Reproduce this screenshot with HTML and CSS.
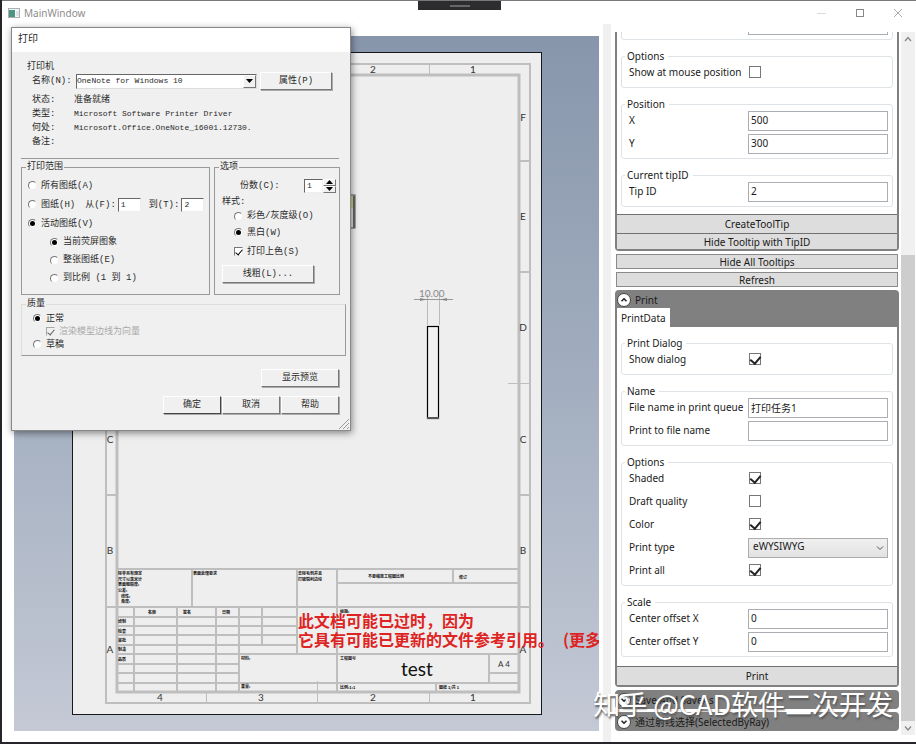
FILE: index.html
```html
<!DOCTYPE html>
<html lang="en">
<head>
<meta charset="utf-8">
<title>MainWindow</title>
<link rel="stylesheet" href="styles.css">
</head>
<body>
<div class="notch"></div>
<div class="window">
  <header class="titlebar">
    <svg class="app-icon" width="12" height="10" viewBox="0 0 12 10"><rect x=".5" y=".5" width="11" height="9" fill="#f4f6f6" stroke="#a9b0b0"/><rect x="1" y="2" width="6" height="7" fill="#4d9484"/><rect x="8" y="3" width="3" height="5" fill="#dfe3e6"/></svg>
    <h1>MainWindow</h1>
    <div class="caption">
      <button aria-label="Minimize"><svg width="10" height="10"><path d="M0 5.5H9" stroke="#dadada" fill="none"/></svg></button>
      <button aria-label="Maximize"><svg width="10" height="10"><rect x="1.500" y="1.500" width="7" height="7" stroke="#888" fill="none"/></svg></button>
      <button aria-label="Close"><svg width="10" height="10"><path d="M1 1L9 9M9 1L1 9" stroke="#aaa" fill="none"/></svg></button>
    </div>
  </header>

  <main class="workspace">
    <div class="viewport">
      <svg class="sheet" viewBox="14 36 585 695">
        <defs><linearGradient id="sky" x1="0" y1="0" x2="0" y2="1"><stop offset="0" stop-color="#8896ac"/><stop offset=".5" stop-color="#a2aebf"/><stop offset="1" stop-color="#c4c9d5"/></linearGradient></defs>
        <rect x="14" y="36" width="585" height="695" fill="url(#sky)"/>
        <rect x="72.500" y="52.500" width="469" height="662" fill="#eee" stroke="#16181c"/>
        <g fill="none" stroke="#bdbebd" stroke-width="2">
          <rect x="106" y="64" width="424" height="639"/>
          <rect x="117" y="75" width="402" height="617" stroke-width="3"/>
          <path d="M117 569H519M117 607H519M192 569V607M297 569V654M337 569V692M337 583H519M453 569V583"/>
          <path d="M134 607V692M177 607V692M216 607V692M239 607V692M262 607V645"/>
          <path d="M117 617H297M117 626H297M117 635H297M117 645H297M117 654H519M117 664H239M117 673H239M117 683H519M436 683V692M489 654V683M489 673H519"/>
        </g>
        <g fill="none" stroke="#bdbebd" stroke-width="1">
          <path d="M429.500 64V75M317.500 64V75M206.500 692V703M317.500 681V703M429.500 692V703M508 383.500H530"/>
          <path stroke-width="2" d="M519 161H530M519 272H530M519 495H530M519 607H530M106 495H117M106 607H117"/>
        </g>
        <g class="zone">
          <text x="373" y="73">2</text><text x="473" y="73">1</text>
          <text x="523" y="121">F</text><text x="523" y="220">E</text><text x="523" y="331">D</text><text x="523" y="443">C</text><text x="523" y="554">B</text><text x="523" y="653">A</text>
          <text x="110" y="443">C</text><text x="110" y="554">B</text><text x="110" y="653">A</text>
          <text x="160" y="701">4</text><text x="261" y="701">3</text><text x="373" y="701">2</text><text x="473" y="701">1</text>
        </g>
        <g class="note">
          <text x="118" y="575">除非另有规定</text><text x="118" y="581">尺寸以毫米计</text><text x="118" y="586">表面粗糙度:</text><text x="118" y="592">公差:</text><text x="121" y="598">线性:</text><text x="121" y="603">角度:</text>
          <text x="193" y="575">表面处理要求</text>
          <text x="298" y="575">去除毛刺并且</text><text x="298" y="581">打破锐利边缘</text>
          <text x="368" y="578">不要缩放工程图比例</text><text x="459" y="579">修订</text>
          <text x="148" y="614">名称</text><text x="183" y="614">签名</text><text x="222" y="614">日期</text>
          <text x="118" y="623">绘制</text><text x="118" y="633">检查</text><text x="118" y="642">审批</text><text x="118" y="651">制造</text><text x="118" y="661">品质</text>
          <text x="241" y="660">材料:</text><text x="241" y="688">重量:</text><text x="340" y="613">标题:</text><text x="340" y="660">工程图号</text><text x="340" y="689">比例:1:1</text><text x="439" y="689">图纸 1/共 1</text>
        </g>
        <text class="part" x="401" y="676">test</text>
        <text class="paper" x="498" y="667">A 4</text>
        <g fill="none" stroke="#999">
          <path stroke="#bbb" d="M427.500 294V325M439.500 294V325"/><path d="M414 299.500H453"/>
        </g>
        <path fill="#888" d="M427 299.500L420 298V301ZM440 299.500L447 298V301Z"/>
        <text class="dim" x="419" y="297">10.00</text>
        <rect x="427.500" y="326.500" width="11" height="92" fill="#f2f2f2" stroke="#000" stroke-width="1.200"/>
        <path d="M427 418H439" stroke="#555" stroke-width="2"/>
        <rect x="340" y="195" width="15" height="33" fill="#ddd" stroke="#555"/>
        <rect x="340" y="196" width="13" height="12" fill="#cbd088"/>
        <path d="M354 196V228" stroke="#666" stroke-width="2"/>
        <g class="warning">
          <text x="298" y="627">此文档可能已过时，因为</text>
          <text x="298" y="646">它具有可能已更新的文件参考引用。</text>
          <text x="563" y="646">(更多</text>
        </g>
      </svg>
    </div>

    <div class="splitter"></div>

    <div class="panel">
      <section class="card first">
        <div class="fields">
          <fieldset><div class="row"><span></span><input type="text" aria-label="Text"></div></fieldset>
          <fieldset><legend>Options</legend>
            <div class="row"><label for="mouse">Show at mouse position</label><input id="mouse" type="checkbox"></div></fieldset>
          <fieldset><legend>Position</legend>
            <div class="row"><label for="px">X</label><input id="px" type="text" value="500"></div>
            <div class="row"><label for="py">Y</label><input id="py" type="text" value="300"></div></fieldset>
          <fieldset><legend>Current tipID</legend>
            <div class="row"><label for="tip">Tip ID</label><input id="tip" type="text" value="2"></div></fieldset>
        </div>
        <button class="wide tall">CreateToolTip</button>
        <button class="wide">Hide Tooltip with TipID</button>
      </section>
      <button class="wide loose">Hide All Tooltips</button>
      <button class="wide loose">Refresh</button>

      <section class="card">
        <h2><button class="knob" aria-label="Collapse"><svg width="14" height="14" viewBox="0 0 14 14"><circle cx="7" cy="7" r="6.500" fill="#fff" stroke="#444"/><path d="M4.500 8.300L7 5.800L9.500 8.300" fill="none" stroke="#222" stroke-width="1.500"/></svg></button>Print</h2>
        <div class="tabs"><button class="tab">PrintData</button></div>
        <div class="fields body">
          <fieldset><legend>Print Dialog</legend>
            <div class="row"><label for="show">Show dialog</label><input id="show" type="checkbox" checked></div></fieldset>
          <fieldset><legend>Name</legend>
            <div class="row"><label for="queue">File name in print queue</label><input id="queue" type="text" value="打印任务1"></div>
            <div class="row"><label for="file">Print to file name</label><input id="file" type="text"></div></fieldset>
          <fieldset><legend>Options</legend>
            <div class="row"><label for="shaded">Shaded</label><input id="shaded" type="checkbox" checked></div>
            <div class="row"><label for="draft">Draft quality</label><input id="draft" type="checkbox"></div>
            <div class="row"><label for="color">Color</label><input id="color" type="checkbox" checked></div>
            <div class="row"><label for="type">Print type</label><div class="combo"><select id="type"><option>eWYSIWYG</option></select><svg width="8" height="6" viewBox="0 0 8 6"><path d="M1 1.500L4 4.500L7 1.500" fill="none" stroke="#555"/></svg></div></div>
            <div class="row"><label for="all">Print all</label><input id="all" type="checkbox" checked></div></fieldset>
          <fieldset><legend>Scale</legend>
            <div class="row"><label for="ox">Center offset X</label><input id="ox" type="text" value="0"></div>
            <div class="row"><label for="oy">Center offset Y</label><input id="oy" type="text" value="0"></div></fieldset>
        </div>
        <button class="wide tall">Print</button>
      </section>
      <section class="card folded"><h2><button class="knob" aria-label="Expand"><svg width="14" height="14" viewBox="0 0 14 14"><circle cx="7" cy="7" r="6.500" fill="#fff" stroke="#444"/><path d="M4.500 5.800L7 8.300L9.500 5.800" fill="none" stroke="#222" stroke-width="1.500"/></svg></button>Save And SaveAs</h2></section>
      <section class="card folded"><h2><button class="knob" aria-label="Expand"><svg width="14" height="14" viewBox="0 0 14 14"><circle cx="7" cy="7" r="6.500" fill="#fff" stroke="#444"/><path d="M4.500 5.800L7 8.300L9.500 5.800" fill="none" stroke="#222" stroke-width="1.500"/></svg></button>通过射线选择(SelectedByRay)</h2></section>
    </div>

    <div class="scrollbar">
      <svg width="8" height="14" viewBox="0 0 8 14"><path d="M1 9L4 5.500L7 9" fill="none" stroke="#888" stroke-width="1.300"/></svg>
      <div class="track"><div class="thumb"></div></div>
      <svg width="8" height="14" viewBox="0 0 8 14"><path d="M1 5.500L4 9L7 5.500" fill="none" stroke="#888" stroke-width="1.300"/></svg>
    </div>
  </main>
  <div class="watermark">知乎 @CAD软件二次开发</div>
</div>

<form class="dialog">
  <h2>打印</h2>
  <div class="dialog-body">
    <div class="printer">
      <h3>打印机</h3>
      <div class="name-row"><label for="printer">名称(N):</label>
        <div class="classic-combo"><select id="printer"><option>OneNote for Windows 10</option></select><span class="drop"><svg width="7" height="4"><path d="M0 0H7L3.500 4Z"/></svg></span></div>
        <button type="button">属性(P)</button></div>
      <dl>
        <dt>状态:</dt><dd class="cjk">准备就绪</dd>
        <dt>类型:</dt><dd>Microsoft Software Printer Driver</dd>
        <dt>何处:</dt><dd>Microsoft.Office.OneNote_16001.12730.</dd>
        <dt>备注:</dt><dd></dd>
      </dl>
    </div>
    <div class="groups">
      <fieldset><legend>打印范围</legend>
        <div class="line"><label><input type="radio" name="range">所有图纸(A)</label></div>
        <div class="line"><label><input type="radio" name="range">图纸(H)</label><label class="from">从(F): <input type="text" value="1"></label><label class="to">到(T): <input type="text" value="2"></label></div>
        <div class="line"><label><input type="radio" name="range" checked>活动图纸(V)</label></div>
        <div class="nested">
          <div class="line"><label><input type="radio" name="area" checked>当前荧屏图象</label></div>
          <div class="line"><label><input type="radio" name="area">整张图纸(E)</label></div>
          <div class="line"><label><input type="radio" name="area">到比例 (1 到 1)</label></div>
        </div>
      </fieldset>
      <fieldset class="choices"><legend>选项</legend>
        <div class="copies"><label for="copies">份数(C):</label><input id="copies" type="text" value="1"><span class="spin"><button type="button" aria-label="Up"><svg width="7" height="4"><path d="M0 4H7L3.500 0Z"/></svg></button><button type="button" aria-label="Down"><svg width="7" height="4"><path d="M0 0H7L3.500 4Z"/></svg></button></span></div>
        <div class="style-title">样式:</div>
        <div class="styles">
          <div class="line short"><label><input type="radio" name="tone">彩色/灰度级(O)</label></div>
          <div class="line"><label><input type="radio" name="tone" checked>黑白(W)</label></div>
          <div class="line"><label><input type="checkbox" checked>打印上色(S)</label></div>
        </div>
        <button type="button" class="weights">线粗(L)...</button>
      </fieldset>
    </div>
    <fieldset class="quality"><legend>质量</legend>
      <div class="line"><label><input type="radio" name="quality" checked>正常</label></div>
      <div class="line short sub"><label><input type="checkbox" checked disabled>渲染模型边线为向量</label></div>
      <div class="line"><label><input type="radio" name="quality">草稿</label></div>
    </fieldset>
    <div class="actions">
      <button type="button" class="preview">显示预览</button>
      <div><button type="button" class="default">确定</button><button type="button">取消</button><button type="button">帮助</button></div>
    </div>
  </div>
  <svg class="grip" width="12" height="12"><path d="M1 11L11 1M5 11L11 5M9 11L11 9" stroke="#999" fill="none"/></svg>
</form>
</body>
</html>
```
FILE: styles.css
```css
* { box-sizing: border-box; }
body {
  margin: 0;
  background: #26262a;
  color: #1a1a1a;
  font: 10px/14px "Noto Sans", "Noto Sans CJK SC", sans-serif;
}
h1, h2, h3, dl, dd, fieldset, legend { margin: 0; padding: 0; font: inherit; }
button, input, select { margin: 0; padding: 0; font: inherit; color: inherit; border-radius: 0; }
input[type="checkbox"], input[type="radio"], select { appearance: none; }
svg { display: block; }

.notch {
  position: absolute;
  z-index: 2;
  top: 1px;
  left: 418px;
  width: 83px;
  height: 9px;
  background: linear-gradient(#666, #666) center / 20px 2px no-repeat #2d2d30;
}
.window {
  position: relative;
  display: flex;
  flex-direction: column;
  min-height: calc(100vh - 2px);
  margin: 0 0 2px 2px;
  border-top: 1px solid #77777c;
  background: #fff;
}
.titlebar {
  display: flex;
  align-items: center;
  gap: 4px;
  height: 23px;
  padding: 0 13px 0 6px;
  color: #8c8c8c;
}
.caption { display: flex; gap: 28px; margin-left: auto; }
.caption button { border: 0; background: none; }
.workspace {
  flex: 1;
  display: grid;
  grid-template-columns: minmax(0, 585fr) 8px minmax(0, 284fr) 14px;
  padding: 0 11px 0 12px;
}
.viewport { padding-top: 12px; }
.sheet { width: 100%; }
.splitter { margin: 0 -4px 0 4px; background: #f0f0f0; }
.panel { margin: 8px -8px 0 8px; overflow: hidden; }
.scrollbar {
  display: flex;
  flex-direction: column;
  align-items: center;
  margin: 8px -10px 7px 10px;
  background: #f0f0f0;
}
.track { flex: 1; width: 100%; padding-top: 209px; }
.thumb { height: 100%; background: #cdcdcd; }

.zone text { font: 10px Lato, sans-serif; text-anchor: middle; fill: #333; }
.note text { font: bold 4px "Noto Sans CJK SC", sans-serif; fill: #111; }
.part { font: 19px Lato, sans-serif; fill: #111; }
.paper { font: 8px Lato, sans-serif; fill: #333; }
.dim { font: 10px Lato, sans-serif; fill: #8a8a8a; }
.warning text { font: bold 16px "Noto Sans CJK SC", sans-serif; fill: #de2323; }

.card { margin-bottom: 3px; border: 2px solid #808080; border-radius: 4px; }
.first { margin-top: -18px; border-top: 0; border-radius: 0 0 4px 4px; }
.fields { display: flex; flex-direction: column; gap: 9px; padding: 0 4px 7px; }
.body { padding: 9px 4px; }
.fields fieldset {
  min-width: 0;
  padding: 0 4px 1px 7px;
  border: 1px solid #dde3e6;
  border-radius: 3px;
}
.fields legend { margin-left: -4px; padding: 0 4px 0 2px; }
.row { display: grid; grid-template-columns: 119px minmax(0, 1fr); height: 23px; }
.row label { line-height: 18px; white-space: nowrap; }
.row input[type="text"] { width: 100%; height: 20px; padding: 0 2px 2px; border: 1px solid #abadb3; background: #fff; }
.row input[type="checkbox"] { width: 12px; height: 12px; margin: 3px 0 0 1px; border: 1px solid #777; background: #fff; }
.row input[type="checkbox"]:checked::after {
  content: "";
  display: block;
  width: 5px;
  height: 8px;
  margin: 0 2px;
  border: solid #222;
  border-width: 0 2px 2px 0;
  transform: rotate(40deg);
}
.combo { position: relative; height: 20px; }
.combo select { display: block; width: 100%; height: 20px; padding: 0 4px 4px; border: 1px solid #acacac; background: linear-gradient(#f0f0f0, #e2e2e2); }
.combo svg { position: absolute; right: 4px; top: 7px; }
.wide { display: block; width: 100%; height: 16px; border: 0; border-top: 1px solid #707070; background: #ddd; line-height: 14px; }
.tall { height: 19px; }
.loose { width: calc(100% - 2px); height: 15px; margin: 0 1px 3px; border: 1px solid #8a8a8a; line-height: 12px; }
.card h2 { display: flex; align-items: center; gap: 4px; height: 16px; background: #808080; }
.folded h2 { height: 15px; }
.knob { border: 0; background: none; }
.tabs { height: 19px; background: #808080; }
.tab { display: block; height: 19px; padding: 0 4px; border: 0; background: #fff; }
.watermark {
  position: absolute;
  right: 23px;
  bottom: 18px;
  color: #fff;
  font: 27px/40px "Noto Sans CJK SC", sans-serif;
  white-space: nowrap;
  text-shadow: 1px 2px 2px #555;
}

.dialog {
  position: absolute;
  z-index: 1;
  top: 27px;
  left: 11px;
  width: 340px;
  border: 1px solid #888;
  background: #f0f0f0;
  box-shadow: 1px 2px 7px rgba(0, 0, 0, .45);
  color: #2a2a2a;
  font: 9px/10px "Liberation Mono", "Noto Sans CJK SC", monospace;
}
.dialog > h2 { height: 24px; padding-left: 6px; background: #fff; font-size: 10px; line-height: 23px; }
.dialog-body { padding: 10px 4px 16px 9px; }
.printer { margin-right: 7px; padding-bottom: 9px; border-bottom: 1px solid #999; }
.printer h3 { padding-left: 6px; }
.name-row { display: grid; grid-template-columns: 44px 181px 72px; align-items: center; padding-left: 11px; height: 18px; }
.name-row button { margin-left: 3px; width: 72px; }
.classic-combo { position: relative; }
.classic-combo select { display: block; width: 100%; height: 15px; padding: 0; border: 1px solid; border-color: #666 #ddd #ddd #666; background: #fff; font-size: 8px; }
.drop { position: absolute; right: 1px; top: 1px; display: grid; place-items: center; width: 13px; height: 13px; border: 1px solid; border-color: #fff #777 #777 #fff; background: #f0f0f0; }
.printer dl { display: grid; grid-template-columns: 42px 1fr; grid-auto-rows: 14px; padding: 3px 0 0 11px; line-height: 14px; }
.printer dd { font-size: 8px; }
.printer dd.cjk { font-size: 9px; }
.dialog button { height: 18px; border: 1px solid; border-color: #fff #777 #777 #fff; background: #f0f0f0; box-shadow: 1px 1px 0 #aaa; line-height: 12px; }
.groups { display: grid; grid-template-columns: 189px 126px; gap: 4px; padding-top: 3px; }
.dialog fieldset { min-width: 0; border: 1px solid #999; }
.groups fieldset { padding: 4px 0 3px; }
.dialog legend { margin-left: 4px; padding: 0 1px; }
.line { display: flex; align-items: center; height: 19px; padding-left: 6px; }
.line.short { height: 14px; }
.nested { padding-left: 22px; }
.nested .line { height: 18px; }
.line label { display: flex; align-items: center; white-space: nowrap; }
.dialog input[type="radio"], .dialog input[type="checkbox"] {
  width: 9px;
  height: 9px;
  margin-right: 4px;
  border: 1px solid;
  border-color: #777 #eee #eee #777;
  background: #fff;
}
.dialog input[type="radio"] { border-radius: 50%; }
.dialog input[type="radio"]:checked::after { content: ""; display: block; width: 5px; height: 5px; margin: 1px; border-radius: 50%; background: #000; }
.dialog input[type="checkbox"]:checked::after { content: ""; display: block; width: 3px; height: 6px; margin: 0 2px; border: solid #000; border-width: 0 1px 1px 0; transform: rotate(40deg); }
.dialog input:disabled { background: #f0f0f0; opacity: .6; }
.dialog input[type="text"] { width: 23px; height: 14px; padding: 0 2px; border: 1px solid; border-color: #666 #eee #eee #666; background: #fff; font-size: 8px; }
.line .from { margin-left: 10px; gap: 2px; }
.line .to { margin-left: 8px; gap: 2px; }
.copies { display: flex; align-items: center; height: 19px; padding-left: 25px; }
.copies label { width: 64px; }
.dialog .copies input { width: 19px; }
.spin { display: grid; width: 13px; }
.dialog .spin button { display: grid; place-items: center; height: 7px; box-shadow: none; }
.style-title { padding-left: 7px; line-height: 14px; }
.styles { padding-left: 13px; }
.weights { width: 92px; margin: 4px 0 8px 7px; }
.dialog .quality { margin-top: 4px; padding: 2px 0 3px; border-top-color: #ddd; border-left-color: #ddd; }
.quality .line { height: 15px; padding-left: 11px; }
.quality .line.short { height: 11px; }
.quality .line.sub { padding-left: 24px; color: #aaa; }
.actions { display: flex; flex-direction: column; align-items: flex-end; gap: 9px; padding: 13px 7px 0 0; }
.actions div { display: flex; gap: 1px; }
.actions button { width: 58px; }
.actions .preview { width: 78px; }
.actions .default { border-right-color: #444; border-bottom-color: #444; }
.grip { position: absolute; right: 0; bottom: 0; }
```
